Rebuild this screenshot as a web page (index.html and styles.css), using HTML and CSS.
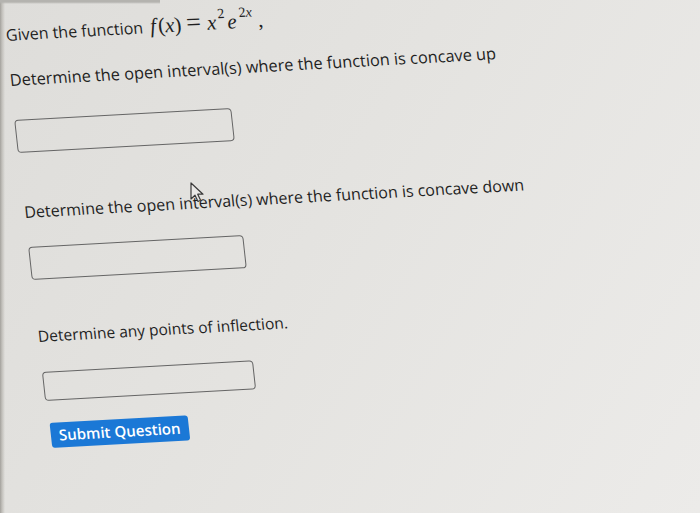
FILE: index.html
```html
<!DOCTYPE html>
<html lang="en">
<head>
<meta charset="utf-8">
<title>Concavity question</title>
<link rel="stylesheet" href="styles.css">
</head>
<body>
<div class="page">
  <p class="line l0">Given the function <span class="math"><span class="mi f">f</span><span class="mo">(</span><span class="mi">x</span><span class="mo">)</span><span class="eq">=</span><span class="mi">x</span><sup class="sup s1">2</sup><span class="mi">e</span><sup class="sup s2">2<i>x</i></sup><span class="comma">,</span></span></p>
  <p class="line l1">Determine the open interval(s) where the function is concave up</p>
  <input class="ans a1" type="text" aria-label="concave up">
  <p class="line l2">Determine the open interval(s) where the function is concave down</p>
  <input class="ans a2" type="text" aria-label="concave down">
  <p class="line l3">Determine any points of inflection.</p>
  <input class="ans a3" type="text" aria-label="points of inflection">
  <button class="submit" type="button">Submit Question</button>
</div>
<svg class="cursor" width="15" height="21" viewBox="0 0 15 21" aria-hidden="true">
  <path d="M1 1 L1 17 L5 13.2 L8 19.5 L10.6 18.3 L7.7 12.2 L13 12.2 Z" fill="rgba(240,240,238,0.55)" stroke="#3a3a3a" stroke-width="1.2" stroke-linejoin="round"/>
</svg>
</body>
</html>
```
FILE: styles.css
```css
html {
  height: 100%;
  background:
    linear-gradient(to bottom, #b4b3af 0, #b4b3af 2px, rgba(180,179,175,0) 4px) 0 0 / 160px 100% no-repeat,
    linear-gradient(to right, #a3a19c 0, #c2c0bb 2px, rgba(200,198,194,0) 5px),
    linear-gradient(120deg, #dedddA 0%, #e4e3e0 45%, #ecebe9 100%);
}

body {
  margin: 0;
  height: 100%;
  overflow: hidden;
  position: relative;
  font-family: "Open Sans", "Noto Sans", sans-serif;
  color: #1f1f1f;
}

.page {
  width: 560px;
  display: flex;
  flex-direction: column;
  align-items: flex-start;
  padding: 23px 0 0 1px;
  transform-origin: 0 0;
  transform: matrix(1, -0.055, 0.11, 1, 0, 0);
}

.line {
  margin: 0;
  font-size: 16px;
  line-height: 24px;
  height: 24px;
  white-space: nowrap;
}

.l0 { margin-left: 1px; }
.l1 { margin-top: 21px; font-size: 16.3px; }
.l2 { margin-top: 47px; }
.l3 { margin-top: 44px; font-size: 15.5px; }

.math {
  font-family: "Liberation Serif", "Times New Roman", serif;
  font-size: 21px;
  line-height: 1;
  margin-left: 3px;
}

.mi {
  font-style: italic;
}

.f { margin-right: 2px; }

.eq {
  font-style: normal;
  font-size: 26px;
  line-height: 0;
  margin: 0 6px 0 5px;
}

.sup {
  font-size: 14px;
  line-height: 0;
  vertical-align: 11px;
}

.sup i { font-style: italic; }

.s1 { margin: 0 2px 0 2px; }
.s2 { margin-left: 3px; }

.comma { margin-left: 5px; font-style: normal; }

.ans {
  box-sizing: border-box;
  display: block;
  margin: 0;
  padding: 0 6px;
  border: 1.3px solid #656565;
  border-radius: 4px;
  background: transparent;
  font: inherit;
}

.a1 { margin-top: 28px; width: 217px; height: 33px; }
.a2 { margin-top: 23px; width: 215px; height: 33px; }
.a3 { margin-top: 24px; width: 211px; height: 29px; }

.submit {
  margin: 22px 0 0 2px;
  box-sizing: border-box;
  height: 25px;
  padding: 0 8px;
  border: none;
  border-radius: 3px;
  background: #1b78d6;
  color: #ffffff;
  font-family: "Open Sans", "Noto Sans", sans-serif;
  font-weight: 600;
  font-size: 15px;
  line-height: 25px;
}

.cursor {
  position: absolute;
  left: 190px;
  top: 182px;
}
```
